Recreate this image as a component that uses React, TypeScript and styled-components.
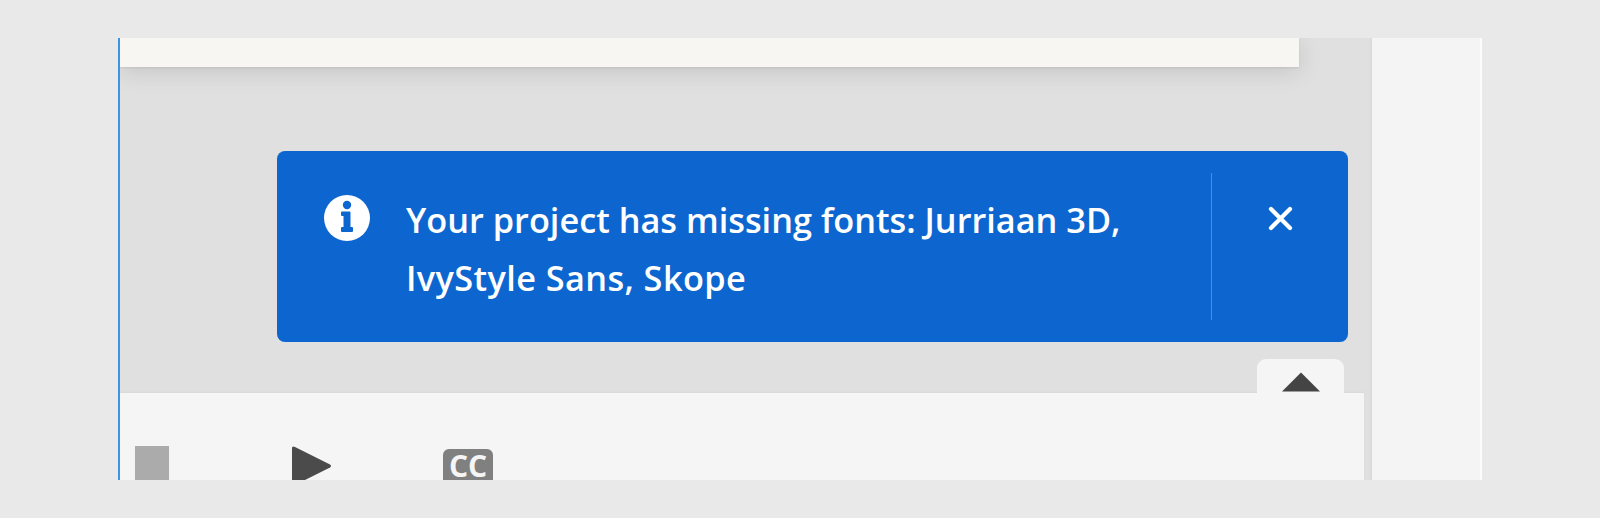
import styled, { createGlobalStyle } from "styled-components";

const Global = createGlobalStyle`
  html, body {
    margin: 0;
    padding: 0;
    height: 100%;
    background: #e9e9e9;
    overflow: hidden;
  }
`;

const Frame = styled.div`
  display: flex;
  width: 1364px;
  height: 442px;
  margin: 38px 0 0 118px;
  border-left: 2px solid #3d94e2;
  box-sizing: border-box;
  overflow: hidden;
`;

const Canvas = styled.div`
  flex: 1;
  display: flex;
  flex-direction: column;
  align-items: flex-start;
  background: #e0e0e0;
  box-shadow: inset -3px 0 3px -2px #d6d6d6;
  min-width: 0;
`;

const Sheet = styled.div`
  width: 1179px;
  height: 29px;
  flex: none;
  background: #f7f6f2;
  box-shadow: 0 4px 24px rgba(0, 0, 0, 0.13), 0 1px 2px rgba(0, 0, 0, 0.08);
`;

const Toast = styled.div`
  width: 1071px;
  height: 191px;
  flex: none;
  margin: 84px 0 0 157px;
  padding: 22px 0;
  box-sizing: border-box;
  display: flex;
  border-radius: 8px;
  background: #0d66d0;
  color: #fff;
`;

const InfoIcon = styled.svg`
  width: 46px;
  height: 46px;
  flex: none;
  margin: 22px 0 0 47px;
`;

const Message = styled.div`
  width: 785px;
  flex: none;
  margin: 18px 0 0 36px;
  font-family: "Open Sans", sans-serif;
  font-size: 34.3px;
  font-weight: 600;
  line-height: 58px;
`;

const MessageLine = styled.div<{ $spacing?: number }>`
  letter-spacing: ${(p) => p.$spacing ?? 0}px;
`;

const Divider = styled.div`
  width: 1px;
  height: 147px;
  flex: none;
  margin-left: 20px;
  background: #4a8ddd;
`;

const CloseButton = styled.div`
  flex: 1;
  display: flex;
  justify-content: center;
  padding-top: 33px;
`;

const CloseIcon = styled.svg`
  width: 25px;
  height: 25px;
`;

const PanelTab = styled.div`
  position: relative;
  z-index: 1;
  width: 87px;
  height: 34px;
  flex: none;
  margin: 17px 0 0 1137px;
  display: flex;
  justify-content: center;
  align-items: flex-end;
  padding-bottom: 1px;
  box-sizing: border-box;
  border-radius: 9px 9px 0 0;
  background: #f5f5f5;
`;

const Panel = styled.div`
  width: 1244px;
  height: 87px;
  flex: none;
  display: flex;
  align-items: flex-start;
  padding: 53px 0 0 15px;
  box-sizing: border-box;
  background: #f5f5f5;
  box-shadow: 0 -1px 2px #d8d8d8;
`;

const StopBox = styled.div`
  width: 34px;
  height: 40px;
  flex: none;
  background: #ababab;
`;

const PlayIcon = styled.svg`
  width: 40px;
  height: 40px;
  flex: none;
  margin-left: 123px;
`;

const CaptionBadge = styled.div`
  width: 50px;
  height: 38px;
  flex: none;
  margin: 3px 0 0 111px;
  padding-top: 3px;
  box-sizing: border-box;
  display: flex;
  justify-content: center;
  border-radius: 6px;
  background: #808080;
  color: #f5f5f5;
  font-family: "Open Sans", sans-serif;
  font-size: 30px;
  font-weight: 700;
  line-height: 28px;
`;

const SidePanel = styled.div`
  width: 110px;
  flex: none;
  background: #f4f4f4;
  border-right: 2px solid #fcfcfc;
  box-sizing: border-box;
`;

export default function App() {
  return (
    <>
      <Global />
      <Frame>
        <Canvas>
          <Sheet />
          <Toast>
            <InfoIcon viewBox="0 0 46 46">
              <circle cx="23" cy="23" r="23" fill="#fff" />
              <circle cx="23" cy="10" r="4.2" fill="#0d66d0" />
              <path
                d="M18 16.5h7.5a1 1 0 0 1 1 1V32H28a1 1 0 0 1 1 1v3a1 1 0 0 1-1 1H18a1 1 0 0 1-1-1v-3a1 1 0 0 1 1-1h1.5V21H18a1 1 0 0 1-1-1v-2.5a1 1 0 0 1 1-1z"
                fill="#0d66d0"
              />
            </InfoIcon>
            <Message>
              <MessageLine>Your project has missing fonts: Jurriaan 3D,</MessageLine>
              <MessageLine $spacing={0.4}>IvyStyle Sans, Skope</MessageLine>
            </Message>
            <Divider />
            <CloseButton>
              <CloseIcon viewBox="0 0 25 25">
                <path
                  d="M3 3l19 19M22 3L3 22"
                  stroke="#fff"
                  strokeWidth="4.2"
                  strokeLinecap="round"
                  fill="none"
                />
              </CloseIcon>
            </CloseButton>
          </Toast>
          <PanelTab>
            <svg width="38" height="20" viewBox="0 0 38 20">
              <path d="M19 0.5L38 19.5H0z" fill="#444" />
            </svg>
          </PanelTab>
          <Panel>
            <StopBox />
            <PlayIcon viewBox="0 0 40 40">
              <path
                d="M0 2Q0 -0.5 3 1L38 18.5Q40 20 38 21.5L3 39Q0 40.5 0 38z"
                fill="#4b4b4b"
              />
            </PlayIcon>
            <CaptionBadge>CC</CaptionBadge>
          </Panel>
        </Canvas>
        <SidePanel />
      </Frame>
    </>
  );
}
